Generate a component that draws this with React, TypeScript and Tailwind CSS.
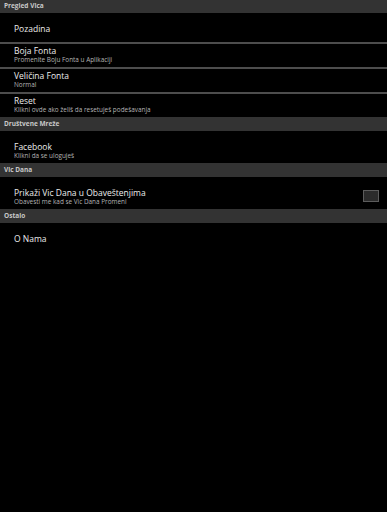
import React from "react";

type Row = {
  title: string;
  subtitle?: string;
  checkbox?: boolean;
};

type Section = {
  header: string;
  rows: Row[];
};

const SECTIONS: Section[] = [
  {
    header: "Pregled Vica",
    rows: [
      { title: "Pozadina" },
      { title: "Boja Fonta", subtitle: "Promenite Boju Fonta u Aplikaciji" },
      { title: "Veličina Fonta", subtitle: "Normal" },
      { title: "Reset", subtitle: "Klikni ovde ako želiš da resetuješ podešavanja" },
    ],
  },
  {
    header: "Društvene Mreže",
    rows: [{ title: "Facebook", subtitle: "Klikni da se uloguješ" }],
  },
  {
    header: "Vic Dana",
    rows: [
      {
        title: "Prikaži Vic Dana u Obaveštenjima",
        subtitle: "Obavesti me kad se Vic Dana Promeni",
        checkbox: true,
      },
    ],
  },
  {
    header: "Ostalo",
    rows: [{ title: "O Nama" }],
  },
];

function SectionHeader({ label, first }: { label: string; first: boolean }) {
  return (
    <div
      className={`flex items-center bg-[#333333] px-[4px] text-[6.5px] font-bold leading-none text-[#c8c8c8] ${
        first ? "h-[13px]" : "h-[14px]"
      }`}
    >
      {label}
    </div>
  );
}

function PrefRow({ row, compact }: { row: Row; compact: boolean }) {
  // rows inside the first group are tighter and split by grey dividers
  const height = compact ? (row.subtitle ? "h-[23px] pt-[2px]" : "h-[29px] pt-[11px]") : "h-[32px] pt-[11px]";
  return (
    <div className={`flex items-start justify-between pl-[14px] pr-[8px] ${height}`}>
      <div className="flex flex-col">
        <span className="text-[8.5px] leading-[10px] text-[#ececec]">{row.title}</span>
        {row.subtitle && (
          <span className="text-[6.4px] leading-[7px] text-[#b4b4b4]">{row.subtitle}</span>
        )}
      </div>
      {row.checkbox && (
        <div className="mt-[2px] h-[12px] w-[16px] border border-[#5c5c5c] bg-[#2b2b2b]" />
      )}
    </div>
  );
}

export default function App() {
  return (
    <div
      className="h-[512px] w-[387px] overflow-hidden bg-black"
      style={{ fontFamily: '"Open Sans", "Noto Sans", sans-serif' }}
    >
      {SECTIONS.map((section, si) => (
        <div key={section.header}>
          <SectionHeader label={section.header} first={si === 0} />
          {section.rows.map((row, ri) => (
            <div key={row.title}>
              {ri > 0 && <div className="h-[2px] bg-[#4d4d4d]" />}
              <PrefRow row={row} compact={si === 0} />
            </div>
          ))}
        </div>
      ))}
    </div>
  );
}
